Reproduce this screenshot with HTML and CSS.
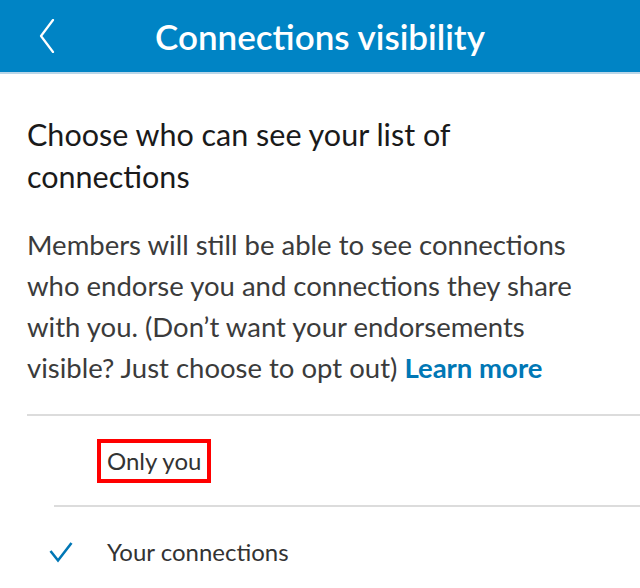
FILE: index.html
```html
<!DOCTYPE html>
<html lang="en">
<head>
<meta charset="utf-8">
<title>Connections visibility</title>
<link rel="stylesheet" href="styles.css">
</head>
<body>
<header class="topbar">
  <button class="back" aria-label="Back">
    <svg width="16" height="34" viewBox="0 0 16 34"><polyline points="14,1 2,17 14,33" fill="none" stroke="#fff" stroke-width="2.2" stroke-linecap="round" stroke-linejoin="round"/></svg>
  </button>
  <h1 class="title">Connections visibility</h1>
</header>
<main class="content">
  <h2 class="heading">Choose who can see your list of connections</h2>
  <p class="desc">Members will still be able to see connections who endorse you and connections they share with you. (Don’t want your endorsements visible? Just choose to opt out) <a class="link" href="#">Learn more</a></p>
  <ul class="options">
    <li class="option">
      <span class="check"></span>
      <span class="label highlighted">Only you</span>
    </li>
    <li class="divider"></li>
    <li class="option">
      <span class="check">
        <svg width="24" height="22" viewBox="0 0 24 22"><polyline points="1.5,10 9,19.5 22.5,2" fill="none" stroke="#0077b5" stroke-width="2.6" stroke-linejoin="miter"/></svg>
      </span>
      <span class="label">Your connections</span>
    </li>
  </ul>
</main>
</body>
</html>
```
FILE: styles.css
```css
* { box-sizing: border-box; }
html, body { margin: 0; padding: 0; background: #fff; }
body {
  width: 640px;
  height: 588px;
  overflow: hidden;
  font-family: Lato, "Source Sans Pro", "Noto Sans", sans-serif;
  color: #222;
}
.topbar {
  height: 74px;
  background: #0084c5;
  border-bottom: 2px solid #b9d6e8;
  display: flex;
  align-items: center;
  justify-content: center;
  position: relative;
}
.back {
  position: absolute;
  left: 39px;
  top: 19px;
  background: none;
  border: 0;
  padding: 0;
  width: 16px;
  height: 34px;
  display: flex;
}
.title {
  margin: 0;
  color: #fff;
  font-size: 35px;
  font-weight: 600;
  letter-spacing: 0;
}
.content {
  padding: 39px 0 0 27px;
}
.heading {
  margin: 0;
  font-size: 30.5px;
  font-weight: 400;
  line-height: 42px;
  color: #1a1a1a;
  padding-right: 60px;
}
.desc {
  margin: 27px 0 0;
  font-size: 27.5px;
  line-height: 41px;
  color: #3b3b3b;
  padding-right: 60px;
}
.link {
  color: #0077b5;
  font-weight: 700;
  text-decoration: none;
}
.options {
  list-style: none;
  margin: 26px 0 0;
  padding: 0;
  border-top: 2px solid #dcdcdc;
}
.option {
  display: flex;
  align-items: center;
  height: 89px;
}
.check {
  width: 80px;
  display: flex;
  padding-left: 22px;
}
.label {
  font-size: 24px;
  line-height: 28px;
  color: #333;
}
.highlighted {
  border: 4px solid #ff0000;
  padding: 4px 6px;
  margin-left: -10px;
}
.divider {
  height: 2px;
  margin-left: 27px;
  background: #dcdcdc;
}
```
